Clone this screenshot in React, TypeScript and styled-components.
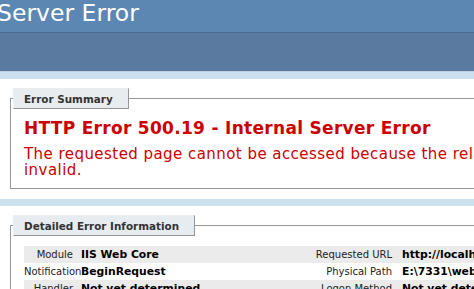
import React from 'react';
import styled, { createGlobalStyle } from 'styled-components';

const GlobalStyle = createGlobalStyle`
  html, body { margin: 0; padding: 0; }
  body {
    background: #cbe1ef;
    font-family: "DejaVu Sans", Verdana, sans-serif;
    font-size: 11.2px;
    color: #000;
    width: 474px;
    height: 289px;
    overflow: hidden;
  }
`;

const Header = styled.div`
  height: 32px;
  background: #5c87b2;
  overflow: hidden;
`;

const Title = styled.h1`
  margin: 0 0 0 -3px;
  font-size: 23.5px;
  line-height: 27px;
  font-weight: normal;
  color: #fff;
  white-space: nowrap;
`;

const VersionBar = styled.div`
  height: 38px;
  background: #5a7aa0;
  border-top: 1px solid #4a6c8e;
  border-bottom: 1px solid #c1cfdd;
`;

const Content = styled.div`
  padding-top: 7px;
  display: flex;
  flex-direction: column;
  gap: 7px;
  width: 1000px;
`;

const Panel = styled.div`
  background: #fff;
  padding: 9px 0 10px 10px;
`;

const Fieldset = styled.fieldset<{ $bottom: number }>`
  margin: 0;
  min-width: 0;
  border: 1px solid #969696;
  padding: 0 0 ${p => p.$bottom}px 13px;
`;

const Legend = styled.legend`
  color: #333;
  padding: 4px 15px 2px 10px;
  margin: 0 0 0 -11px;
  border-top: 1px solid #ededed;
  border-left: 1px solid #ededed;
  border-right: 1px solid #969696;
  border-bottom: 1px solid #969696;
  background: #e7ecf0;
  font-weight: bold;
  font-size: 10.4px;
  line-height: 13px;
`;

const ErrorTitle = styled.h3`
  margin: 9px 0 0;
  font-size: 17px;
  line-height: 20px;
  letter-spacing: 0.3px;
  font-weight: bold;
  color: #cc0000;
  white-space: nowrap;
`;

const ErrorText = styled.h4`
  margin: 8px 0 7px;
  font-size: 15px;
  line-height: 16px;
  letter-spacing: 0.45px;
  font-weight: normal;
  color: #cc0000;
  white-space: nowrap;
`;

const Details = styled.div`
  display: grid;
  grid-template-columns: 201px 1fr;
  margin-top: 10px;
`;

const Table = styled.div`
  display: flex;
  flex-direction: column;
`;

const Row = styled.div<{ $alt?: boolean }>`
  display: flex;
  height: 17px;
  align-items: center;
  background: ${p => (p.$alt ? '#ebebeb' : 'transparent')};
  white-space: nowrap;
`;

const Label = styled.div<{ $w: number; $pad: number }>`
  flex: 0 0 auto;
  width: ${p => p.$w}px;
  padding-right: ${p => p.$pad}px;
  text-align: right;
  color: #222;
  font-size: 10px;
  line-height: 13px;
`;

const Value = styled.div`
  font-weight: bold;
  font-size: 10.8px;
  line-height: 13px;
`;

const left = [
  ['Module', 'IIS Web Core'],
  ['Notification', 'BeginRequest'],
  ['Handler', 'Not yet determined'],
];

const right = [
  ['Requested URL', 'http://localhost:80/'],
  ['Physical Path', 'E:\\7331\\website\\'],
  ['Logon Method', 'Not yet determined'],
];

export default function App() {
  return (
    <>
      <GlobalStyle />
      <Header>
        <Title>Server Error</Title>
      </Header>
      <VersionBar />
      <Content>
        <Panel>
          <Fieldset $bottom={3}>
            <Legend>Error Summary</Legend>
            <ErrorTitle>HTTP Error 500.19 - Internal Server Error</ErrorTitle>
            <ErrorText>
              The requested page cannot be accessed because the related configuration data for the page is
              <br />
              invalid.
            </ErrorText>
          </Fieldset>
        </Panel>
        <Panel>
          <Fieldset $bottom={10}>
            <Legend>Detailed Error Information</Legend>
            <Details>
              <Table>
                {left.map(([l, v], i) => (
                  <Row key={l} $alt={i % 2 === 0}>
                    <Label $w={49} $pad={8}>{l}</Label>
                    <Value>{v}</Value>
                  </Row>
                ))}
              </Table>
              <Table>
                {right.map(([l, v], i) => (
                  <Row key={l} $alt={i % 2 === 0}>
                    <Label $w={167} $pad={10}>{l}</Label>
                    <Value>{v}</Value>
                  </Row>
                ))}
              </Table>
            </Details>
          </Fieldset>
        </Panel>
      </Content>
    </>
  );
}
